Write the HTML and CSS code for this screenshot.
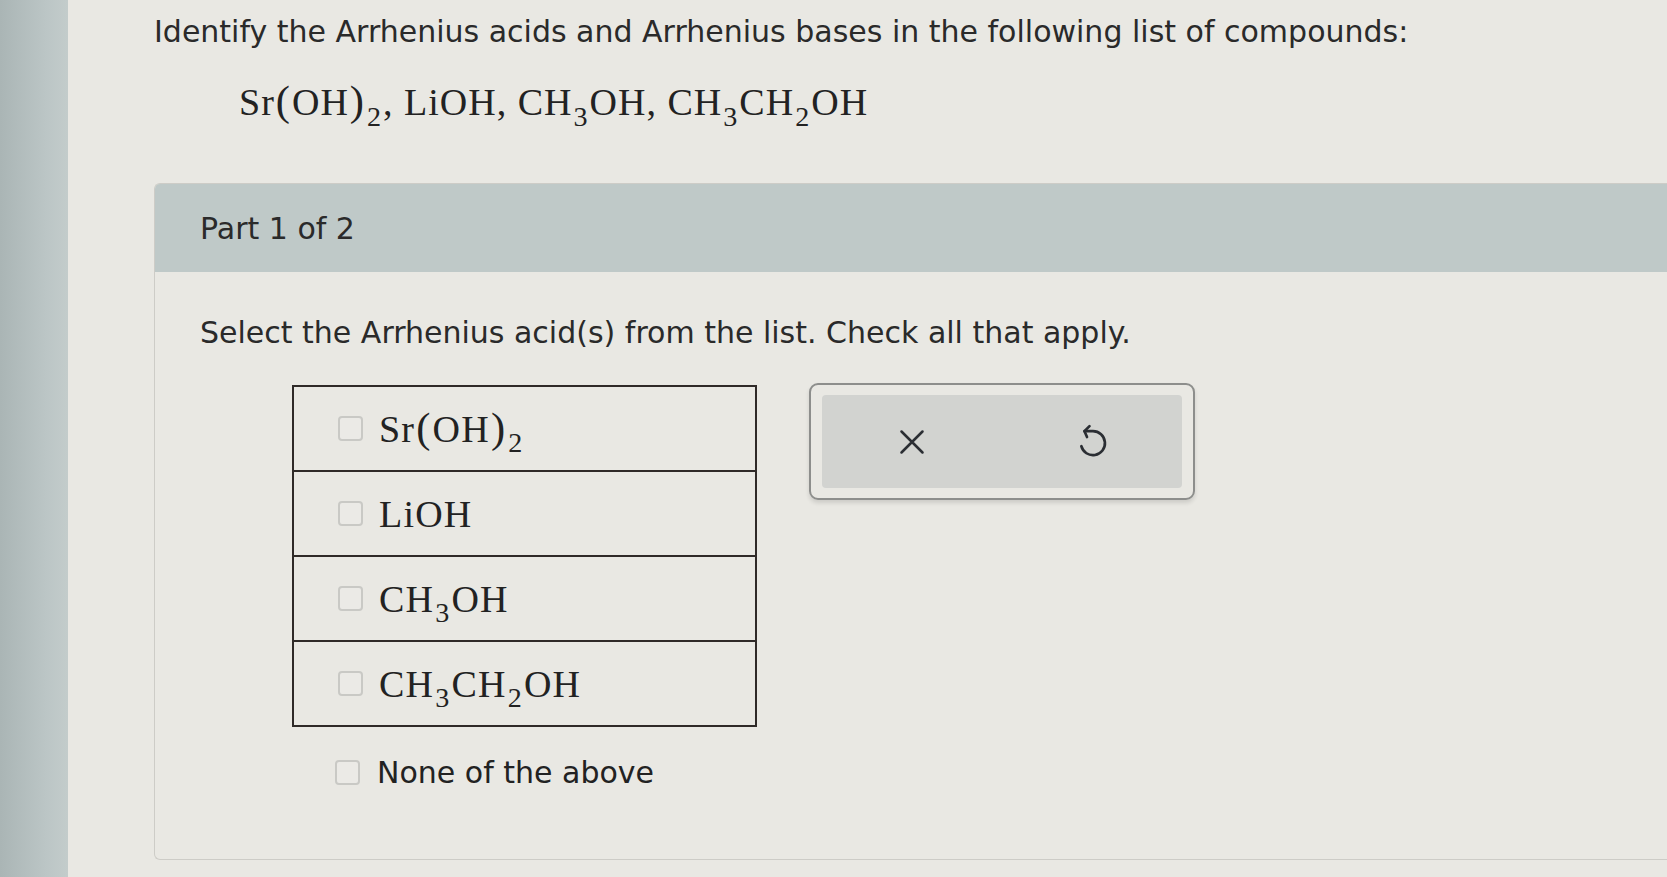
FILE: index.html
```html
<!DOCTYPE html>
<html>
<head>
<meta charset="utf-8">
<link rel="stylesheet" href="styles.css">
</head>
<body>
<div class="page">
  <div class="strip"></div>
  <main class="main">
    <p class="title">Identify the Arrhenius acids and Arrhenius bases in the following list of compounds:</p>
    <p class="formula">Sr<span class="paren">(</span>OH<span class="paren">)</span><sub>2</sub>, LiOH, CH<sub>3</sub>OH, CH<sub>3</sub>CH<sub>2</sub>OH</p>
    <section class="card">
      <div class="card-head">Part 1 of 2</div>
      <div class="card-body">
        <p class="prompt">Select the Arrhenius acid(s) from the list. Check all that apply.</p>
        <div class="answer-row">
          <div class="choices">
            <div class="choice"><span class="box"></span><span class="chem">Sr<span class="paren">(</span>OH<span class="paren">)</span><sub>2</sub></span></div>
            <div class="choice"><span class="box"></span><span class="chem">LiOH</span></div>
            <div class="choice"><span class="box"></span><span class="chem">CH<sub>3</sub>OH</span></div>
            <div class="choice"><span class="box"></span><span class="chem">CH<sub>3</sub>CH<sub>2</sub>OH</span></div>
          </div>
          <div class="tools">
            <div class="tools-inner">
              <svg class="icon" viewBox="0 0 24 24" width="36" height="36"><path d="M5 5 L19 19 M19 5 L5 19" fill="none" stroke="#2b2e33" stroke-width="1.7" stroke-linecap="round"/></svg>
              <svg class="icon" viewBox="0 0 24 24" width="40" height="40"><path d="M7.5 5.5 H12.5 A7.2 7.2 0 1 1 5.6 14.5" fill="none" stroke="#2b2e33" stroke-width="1.6" stroke-linecap="round"/><path d="M10.5 2.5 L7.5 5.5 L9 9" fill="none" stroke="#2b2e33" stroke-width="1.6" stroke-linecap="round" stroke-linejoin="round"/></svg>
            </div>
          </div>
        </div>
        <div class="none-row"><span class="box"></span><span class="none-text">None of the above</span></div>
      </div>
    </section>
  </main>
</div>
</body>
</html>
```

FILE: styles.css
```css
html, body {
  margin: 0;
  padding: 0;
}
body {
  background: #e9e8e3;
  width: 1667px;
  height: 877px;
  overflow: hidden;
  color: #2a2a2a;
  font-family: "DejaVu Sans", Verdana, sans-serif;
}
.page {
  display: flex;
  height: 877px;
}
.strip {
  width: 68px;
  flex: none;
  background: linear-gradient(to right, #aab5b5, #bcc6c6 70%, #c3cccb);
}
.main {
  flex: 1;
  padding-left: 86px;
  display: flex;
  flex-direction: column;
}
.title {
  margin: 14px 0 0 0;
  font-size: 30px;
  line-height: 36px;
  white-space: nowrap;
}
.formula {
  margin: 30px 0 0 85px;
  font-family: "Liberation Serif", "Times New Roman", serif;
  font-size: 38px;
  line-height: 44px;
  letter-spacing: 1px;
  color: #222;
  white-space: nowrap;
}
.paren {
  font-size: 1.12em;
  line-height: 0;
  margin: 0 1px;
}
sub {
  font-size: 0.74em;
  vertical-align: -0.38em;
  line-height: 0;
  margin: 0 1px;
}
.card {
  margin-top: 59px;
  border: 1px solid #cdccc7;
  border-right: none;
  border-radius: 6px 0 0 6px;
  height: 675px;
  display: flex;
  flex-direction: column;
}
.card-head {
  height: 88px;
  background: #bfc9c8;
  border-radius: 5px 0 0 0;
  padding-left: 45px;
  display: flex;
  align-items: center;
  font-size: 30px;
  color: #2a2a2a;
}
.card-body {
  padding-left: 45px;
}
.prompt {
  margin: 43px 0 0 0;
  font-size: 30px;
  line-height: 36px;
  white-space: nowrap;
}
.answer-row {
  display: flex;
  align-items: flex-start;
  margin-top: 34px;
}
.choices {
  margin-left: 92px;
  width: 461px;
  border: 2px solid #2f2a28;
}
.choice {
  height: 83px;
  display: flex;
  align-items: center;
  padding-left: 44px;
  gap: 16px;
  border-top: 2px solid #2f2a28;
}
.choice:first-child {
  border-top: none;
}
.box {
  width: 21px;
  height: 21px;
  border: 2px solid #c9c9c5;
  border-radius: 4px;
  background: #ebeae6;
  flex: none;
}
.chem {
  font-family: "Liberation Serif", "Times New Roman", serif;
  font-size: 38px;
  letter-spacing: 1.2px;
  color: #222;
  white-space: nowrap;
}
.tools {
  margin-left: 52px;
  margin-top: -2px;
  width: 386px;
  height: 117px;
  box-sizing: border-box;
  border: 2px solid #8d8e8c;
  border-radius: 9px;
  padding: 10px 11px;
  box-shadow: 0 3px 4px rgba(0,0,0,0.12);
}
.tools-inner {
  height: 93px;
  background: #d2d3d0;
  border-radius: 4px;
  display: flex;
  align-items: center;
  justify-content: space-between;
  padding: 0 70px 0 72px;
}
.none-row {
  display: flex;
  align-items: center;
  gap: 17px;
  margin-top: 28px;
  margin-left: 135px;
}
.none-text {
  font-size: 30px;
  color: #222;
}
```
